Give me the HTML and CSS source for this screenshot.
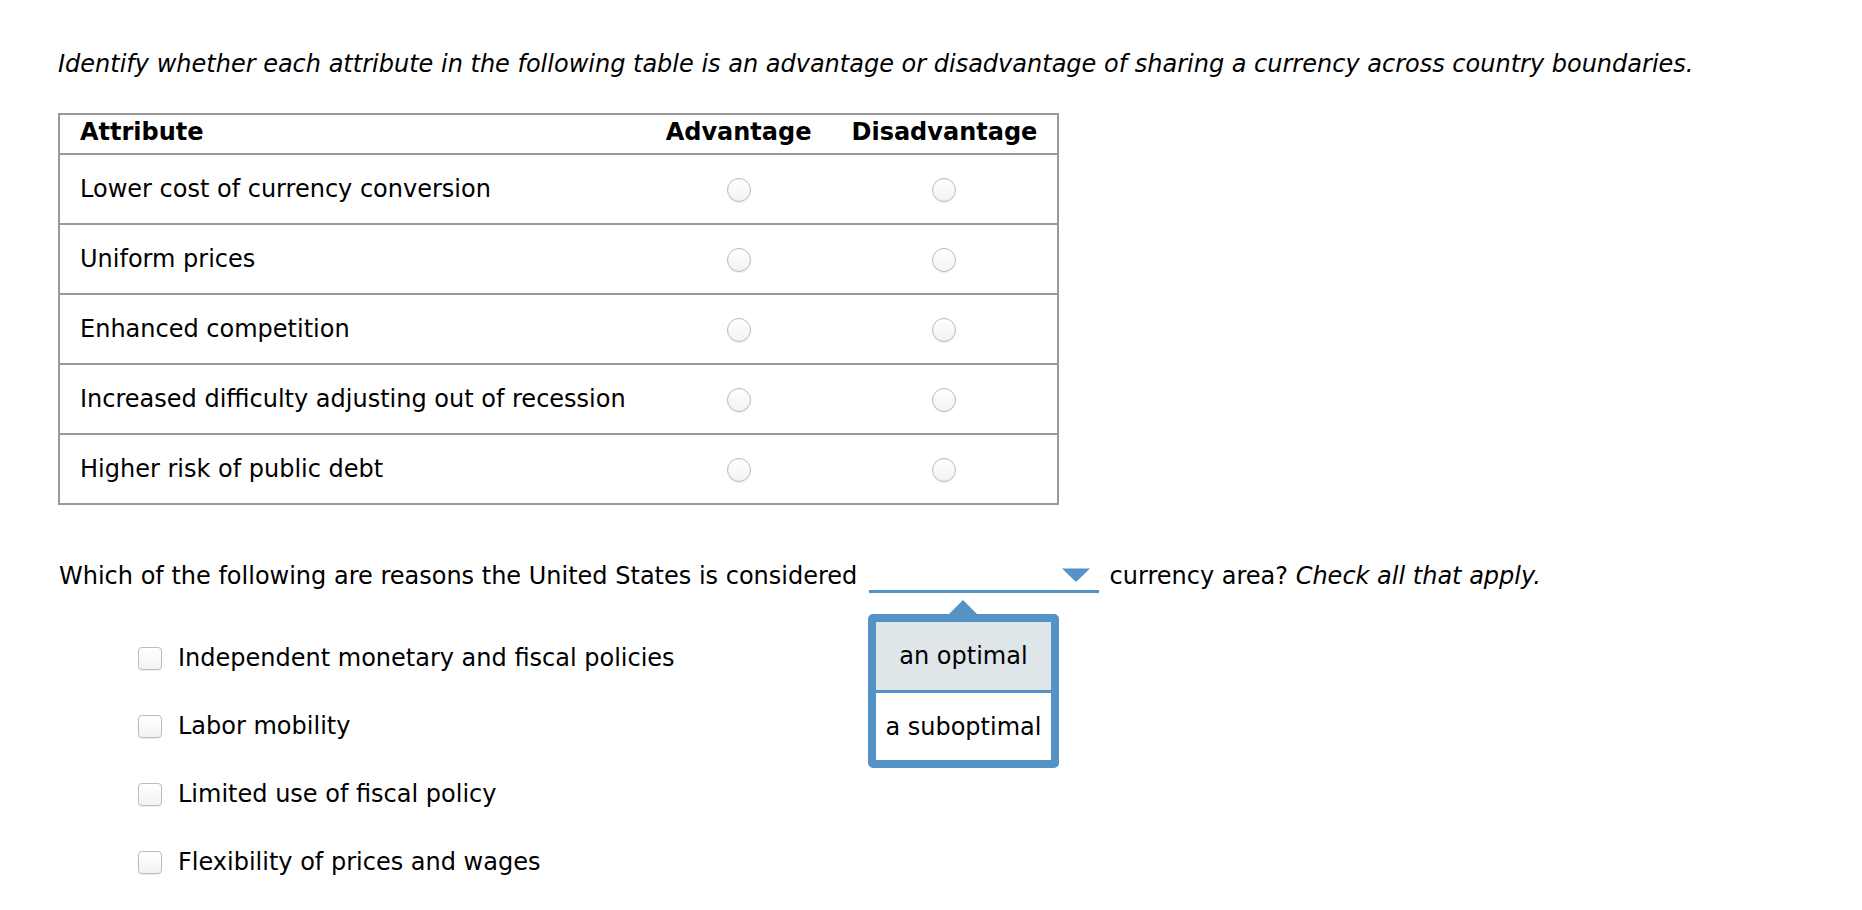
FILE: index.html
```html
<!DOCTYPE html>
<html lang="en">

<head>
    <meta charset="UTF-8">
    <meta name="viewport" content="width=device-width, initial-scale=1.0">
    <title>currency-area</title>
    <link rel="stylesheet" href="styles.css">
</head>

<body>
    <div class="page">
        <p class="intro">Identify whether each attribute in the following table is an advantage or disadvantage of sharing a currency across country boundaries.</p>

        <table class="grid">
            <tr>
                <th class="attr">Attribute</th>
                <th class="adv">Advantage</th>
                <th class="dis">Disadvantage</th>
            </tr>
            <tr>
                <td>Lower cost of currency conversion</td>
                <td class="pick"><span class="radio"></span></td>
                <td class="pick"><span class="radio"></span></td>
            </tr>
            <tr>
                <td>Uniform prices</td>
                <td class="pick"><span class="radio"></span></td>
                <td class="pick"><span class="radio"></span></td>
            </tr>
            <tr>
                <td>Enhanced competition</td>
                <td class="pick"><span class="radio"></span></td>
                <td class="pick"><span class="radio"></span></td>
            </tr>
            <tr>
                <td>Increased difficulty adjusting out of recession</td>
                <td class="pick"><span class="radio"></span></td>
                <td class="pick"><span class="radio"></span></td>
            </tr>
            <tr>
                <td>Higher risk of public debt</td>
                <td class="pick"><span class="radio"></span></td>
                <td class="pick"><span class="radio"></span></td>
            </tr>
        </table>

        <p class="question">Which of the following are reasons the United States is considered
            <span class="dropdown">
                <svg class="arrow" width="30" height="14" viewBox="0 0 30 14">
                    <path d="M1 0.5 H29 L15.8 13.2 Q15 14 14.2 13.2 Z" fill="#5592c5" />
                </svg>
                <span class="popup">
                    <span class="option active">an optimal</span>
                    <span class="option">a suboptimal</span>
                </span>
            </span>
            currency area? <em>Check all that apply.</em></p>

        <div class="checks">
            <div class="check-row"><span class="box"></span>Independent monetary and fiscal policies</div>
            <div class="check-row"><span class="box"></span>Labor mobility</div>
            <div class="check-row"><span class="box"></span>Limited use of fiscal policy</div>
            <div class="check-row"><span class="box"></span>Flexibility of prices and wages</div>
        </div>
    </div>
</body>

</html>
```

FILE: styles.css
```css
body {
    margin: 0;
    background-color: #fff;
    color: #000;
    font-family: "DejaVu Sans", Verdana, sans-serif;
    font-size: 24px;
    line-height: 28px;
}

.page {
    padding: 50px 0 0 58px;
}

.intro {
    margin: 0;
    font-style: italic;
}

/* attribute table */
.grid {
    margin-top: 35px;
    width: 1000px;
    border-collapse: collapse;
    border: 2px solid #999;
}

.grid th {
    text-align: center;
    padding: 3px 20px 7px;
    border-bottom: 2px solid #999;
    white-space: nowrap;
}

.grid th.attr {
    text-align: left;
}

.grid th.adv {
    width: 148px;
}

.grid th.dis {
    width: 180px;
}

.grid td {
    padding: 20px 20px;
    border-top: 2px solid #999;
    white-space: nowrap;
}

.grid td.pick {
    text-align: center;
}

.radio {
    display: inline-block;
    width: 22px;
    height: 22px;
    border: 1px solid #bababa;
    border-radius: 50%;
    background: linear-gradient(#fff, #f2f2f2);
    box-shadow: 0 1px 1px rgba(0, 0, 0, 0.07);
    vertical-align: middle;
    margin-top: -1px;
}

/* second question */
.question {
    margin: 57px 0 0 1px;
}

.dropdown {
    position: relative;
    display: inline-block;
    width: 230px;
    box-sizing: border-box;
    padding: 0 8px 8px 0;
    margin: 0 3px 0 4px;
    border-bottom: 3px solid #5592c5;
    vertical-align: -9px;
}

.arrow {
    display: block;
    margin-left: auto;
}

.popup {
    position: absolute;
    left: -1px;
    top: calc(100% + 24px);
    width: 191px;
    box-sizing: border-box;
    border: 8px solid #5592c5;
    border-radius: 5px;
    background-color: #fff;
    display: flex;
    flex-direction: column;
    font-style: normal;
}

.popup::before {
    content: "";
    position: absolute;
    left: 50%;
    top: -22px;
    margin-left: -14px;
    border-left: 14px solid transparent;
    border-right: 14px solid transparent;
    border-bottom: 14px solid #5592c5;
}

.option {
    height: 67px;
    display: flex;
    align-items: center;
    justify-content: center;
}

.option.active {
    background-color: #dfe6ea;
    border-bottom: 3px solid #5592c5;
    height: 68px;
}

/* check all that apply */
.checks {
    margin: 51px 0 0 80px;
    display: flex;
    flex-direction: column;
    gap: 40px;
}

.check-row {
    display: flex;
    align-items: center;
}

.box {
    width: 22px;
    height: 21px;
    border: 1px solid #bcbcbc;
    border-radius: 4px;
    background: linear-gradient(#fff, #f3f3f3);
    box-shadow: 0 1px 1px rgba(0, 0, 0, 0.06);
    margin-right: 16px;
}
```
